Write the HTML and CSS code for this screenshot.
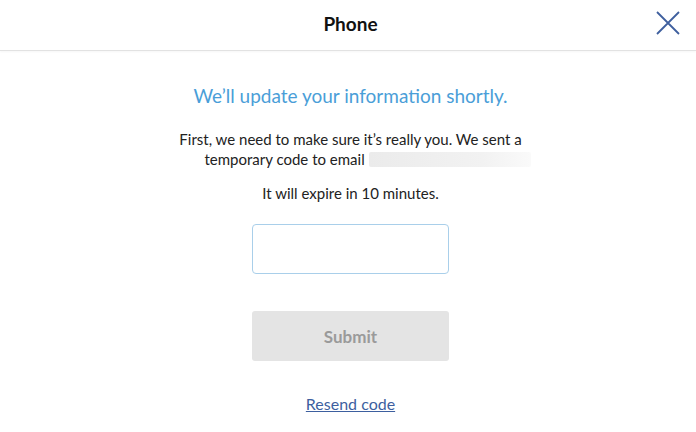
FILE: index.html
```html
<!DOCTYPE html>
<html lang="en">
<head>
    <meta charset="UTF-8">
    <meta name="viewport" content="width=device-width, initial-scale=1.0">
    <title>Phone</title>
    <link rel="stylesheet" href="styles.css">
</head>
<body>
    <header class="topbar">
        <h1>Phone</h1>
        <button class="close" aria-label="Close">
            <svg width="24" height="24" viewBox="0 0 24 24">
                <path d="M1 1 L23 23 M23 1 L1 23" stroke="#3f5f9e" stroke-width="1.8" fill="none"/>
            </svg>
        </button>
    </header>
    <main class="verify">
        <h2>We’ll update your information shortly.</h2>
        <p class="intro">First, we need to make sure it’s really you. We sent a<br>temporary code to email <span class="email"></span></p>
        <p class="expire">It will expire in 10 minutes.</p>
        <form class="code-form">
            <input type="text" class="code" aria-label="Code">
            <button type="submit" class="submit" disabled>Submit</button>
        </form>
        <a href="#" class="resend">Resend code</a>
    </main>
</body>
</html>
```

FILE: styles.css
```css
body {
    font-family: "Lato", "Open Sans", sans-serif;
    margin: 0;
    padding: 0;
    background-color: #ffffff;
    color: #222;
}

.topbar {
    position: relative;
    height: 50px;
    padding-left: 5px;
    border-bottom: 1px solid #e2e2e2;
    box-shadow: 0 1px 2px rgba(0, 0, 0, 0.04);
    display: flex;
    align-items: center;
    justify-content: center;
}
.topbar h1 {
    margin: 0 0 4px;
    font-size: 19px;
    font-weight: 700;
    color: #111;
}
.close {
    position: absolute;
    right: 16px;
    top: 11px;
    padding: 0;
    border: none;
    background: none;
    cursor: pointer;
}
.close svg {
    display: block;
}

.verify {
    display: flex;
    flex-direction: column;
    align-items: center;
    text-align: center;
    padding-left: 5px;
}
.verify h2 {
    margin: 33px 0 0;
    font-size: 19px;
    font-weight: 400;
    color: #4a9ed8;
}
.intro {
    margin: 22px 0 0;
    font-size: 15px;
    line-height: 20px;
}
.email {
    display: inline-block;
    width: 162px;
    height: 15px;
    margin-right: -34px;
    vertical-align: -2px;
    background: linear-gradient(90deg, #ebebeb, #f2f2f2 70%, #fafafa);
    border-radius: 2px;
}
.expire {
    margin: 14px 0 0;
    font-size: 15px;
    line-height: 20px;
}

.code-form {
    display: flex;
    flex-direction: column;
    align-items: center;
    gap: 37px;
    margin-top: 21px;
}
.code {
    box-sizing: border-box;
    width: 197px;
    height: 50px;
    border: 1px solid #a9cfea;
    border-radius: 4px;
    font-size: 16px;
    outline: none;
}
.submit {
    width: 197px;
    height: 50px;
    border: none;
    border-radius: 3px;
    background-color: #e4e4e4;
    color: #9a9a9a;
    font-family: inherit;
    font-size: 17px;
    font-weight: 700;
}

.resend {
    margin-top: 33px;
    font-size: 16px;
    color: #3d5f9f;
}
```
